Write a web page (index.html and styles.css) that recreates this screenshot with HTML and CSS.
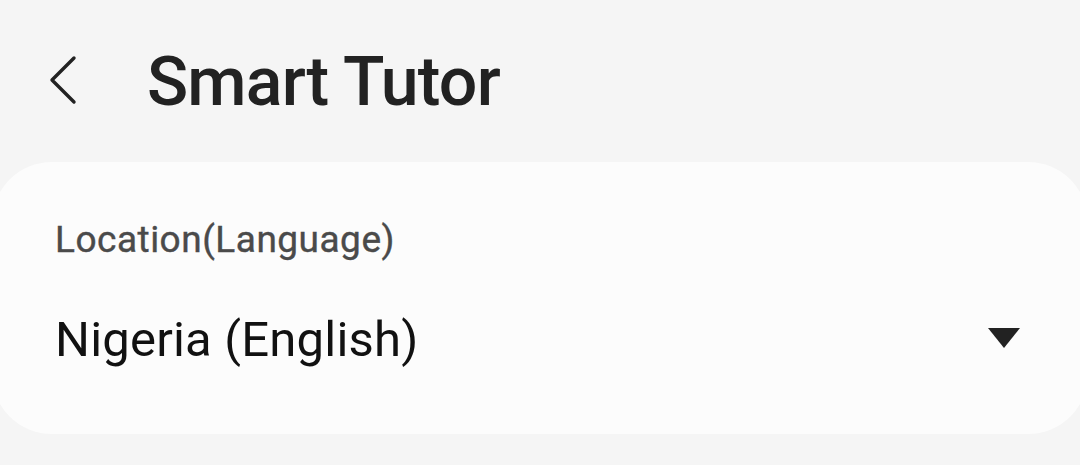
FILE: index.html
```html
<!DOCTYPE html>
<html>
<head>
<meta charset="utf-8">
<link rel="stylesheet" href="styles.css">
</head>
<body>
<div class="page">
  <header class="appbar">
    <button class="back" aria-label="Back">
      <svg width="30" height="50" viewBox="0 0 30 50"><polyline points="25,3 3,25 25,47" fill="none" stroke="#222" stroke-width="3.4" stroke-linecap="round" stroke-linejoin="round"/></svg>
    </button>
    <h1 class="title">Smart Tutor</h1>
  </header>
  <section class="card">
    <div class="label">Location(Language)</div>
    <div class="select">
      <span class="value">Nigeria (English)</span>
      <svg class="caret" width="32" height="20" viewBox="0 0 32 20"><polygon points="0,0 32,0 16,20" fill="#222"/></svg>
    </div>
  </section>
</div>
</body>
</html>
```
FILE: styles.css
```css
html, body {
  margin: 0;
  padding: 0;
  background: #f5f5f5;
  font-family: Roboto, "Noto Sans", sans-serif;
}
.page {
  width: 1080px;
  height: 465px;
  overflow: hidden;
}
.appbar {
  display: flex;
  align-items: center;
  height: 162px;
  box-sizing: border-box;
  padding: 0 0 0 49px;
}
.back {
  background: none;
  border: 0;
  padding: 0;
  width: 30px;
  height: 50px;
  display: flex;
  margin-top: -2px;
}
.title {
  margin: 0 0 0 68px;
  font-size: 68px;
  font-weight: 500;
  color: #222;
  letter-spacing: -0.8px;
  line-height: 1;
  margin-top: 2px;
}
.card {
  margin: 0 -8px;
  height: 272px;
  background: #fcfcfc;
  border-radius: 60px;
  box-sizing: border-box;
  padding: 56px 60px 0 63px;
}
.label {
  font-size: 37px;
  font-weight: 400;
  color: #4a4a4a;
  letter-spacing: 0.5px;
  line-height: 44px;
  -webkit-text-stroke: 0.4px #4a4a4a;
}
.select {
  display: flex;
  align-items: center;
  justify-content: space-between;
  margin-top: 48px;
  padding-right: 8px;
}
.value {
  font-size: 49px;
  color: #111;
  letter-spacing: 0.2px;
  line-height: 60px;
}
.caret {
  display: block;
  margin-top: -4px;
}
```
